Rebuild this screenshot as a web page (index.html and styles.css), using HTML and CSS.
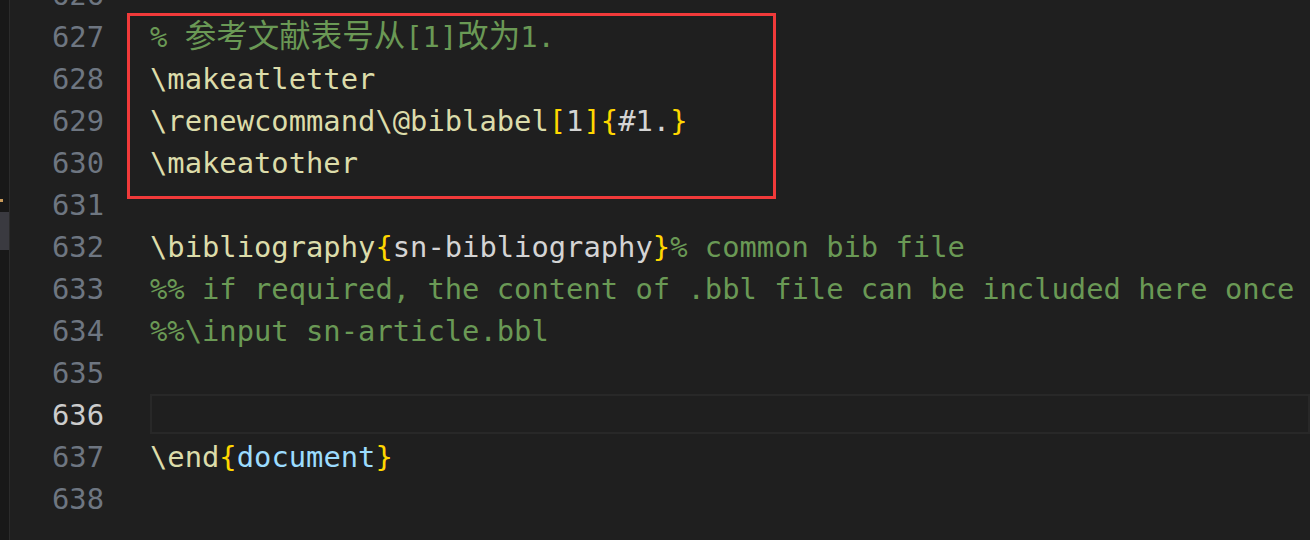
FILE: index.html
```html
<!DOCTYPE html>
<html lang="en">
<head>
    <meta charset="UTF-8">
    <meta name="viewport" content="width=device-width, initial-scale=1.0">
    <title>main.tex</title>
    <link rel="stylesheet" href="styles.css">
</head>
<body>
    <div class="editor">
        <!-- Left panel edge -->
        <div class="side">
            <div class="side-mark"></div>
            <div class="side-thumb"></div>
        </div>

        <!-- Code lines -->
        <div class="lines">
            <div class="line"><span class="num">626</span><span class="code"></span></div>
            <div class="line"><span class="num">627</span><span class="code"><span class="cm">% <span class="cjk">参考文献表号从</span>[1]<span class="cjk">改为</span>1.</span></span></div>
            <div class="line"><span class="num">628</span><span class="code"><span class="kw">\makeatletter</span></span></div>
            <div class="line"><span class="num">629</span><span class="code"><span class="kw">\renewcommand\@biblabel</span><span class="br">[</span><span class="tx">1</span><span class="br">]</span><span class="br">{</span><span class="tx">#1.</span><span class="br">}</span></span></div>
            <div class="line"><span class="num">630</span><span class="code"><span class="kw">\makeatother</span></span></div>
            <div class="line"><span class="num">631</span><span class="code"></span></div>
            <div class="line"><span class="num">632</span><span class="code"><span class="kw">\bibliography</span><span class="br">{</span><span class="tx">sn-bibliography</span><span class="br">}</span><span class="cm">% common bib file</span></span></div>
            <div class="line"><span class="num">633</span><span class="code"><span class="cm">%% if required, the content of .bbl file can be included here once</span></span></div>
            <div class="line"><span class="num">634</span><span class="code"><span class="cm">%%\input sn-article.bbl</span></span></div>
            <div class="line"><span class="num">635</span><span class="code"></span></div>
            <div class="line current"><span class="num">636</span><span class="code"></span></div>
            <div class="line"><span class="num">637</span><span class="code"><span class="kw">\end</span><span class="br">{</span><span class="arg">document</span><span class="br">}</span></span></div>
            <div class="line"><span class="num">638</span><span class="code"></span></div>

            <!-- Annotation box around lines 627-630 -->
            <div class="mark-box"></div>
        </div>
    </div>
</body>
</html>
```

FILE: styles.css
```css
* {
    margin: 0;
    padding: 0;
    box-sizing: border-box;
}

body {
    background-color: #1f1f1f;
    font-family: 'DejaVu Sans Mono', 'Liberation Mono', 'Noto Sans CJK SC', monospace;
    font-size: 28.8px;
    overflow: hidden;
}

.editor {
    display: flex;
    height: 540px;
    overflow: hidden;
}

.side {
    width: 10px;
    flex-shrink: 0;
    background-color: #181818;
    border-right: 1px solid #2b2b2b;
    display: flex;
    flex-direction: column;
}

.side-mark {
    margin-top: 199px;
    width: 3px;
    height: 3px;
    background-color: #c89a5a;
}

.side-thumb {
    margin-top: 10px;
    width: 9px;
    height: 38px;
    background-color: #3a3a40;
}

.lines {
    flex: 1;
    margin-top: -26px;
    position: relative;
    min-width: 0;
}

.line {
    display: flex;
    height: 42px;
    line-height: 42px;
}

.num {
    width: 94px;
    flex-shrink: 0;
    text-align: right;
    color: #6e7681;
}

.code {
    margin-left: 46px;
    flex: 1;
    white-space: pre;
    color: #d4d4d4;
}

.line.current .num {
    color: #cccccc;
}

.line.current .code {
    height: 40px;
    border: 2px solid #282828;
}

.cm {
    color: #6a9955;
}

.cjk {
    font-family: 'Noto Sans CJK SC', sans-serif;
    font-size: 31.5px;
    line-height: 1;
}

.kw {
    color: #dcdcaa;
}

.br {
    color: #ffd700;
}

.tx {
    color: #d4d4d4;
}

.arg {
    color: #9cdcfe;
}

.mark-box {
    position: absolute;
    top: 39px;
    left: 117px;
    width: 649px;
    height: 186px;
    border: 3px solid #f03a3a;
    pointer-events: none;
}
```
